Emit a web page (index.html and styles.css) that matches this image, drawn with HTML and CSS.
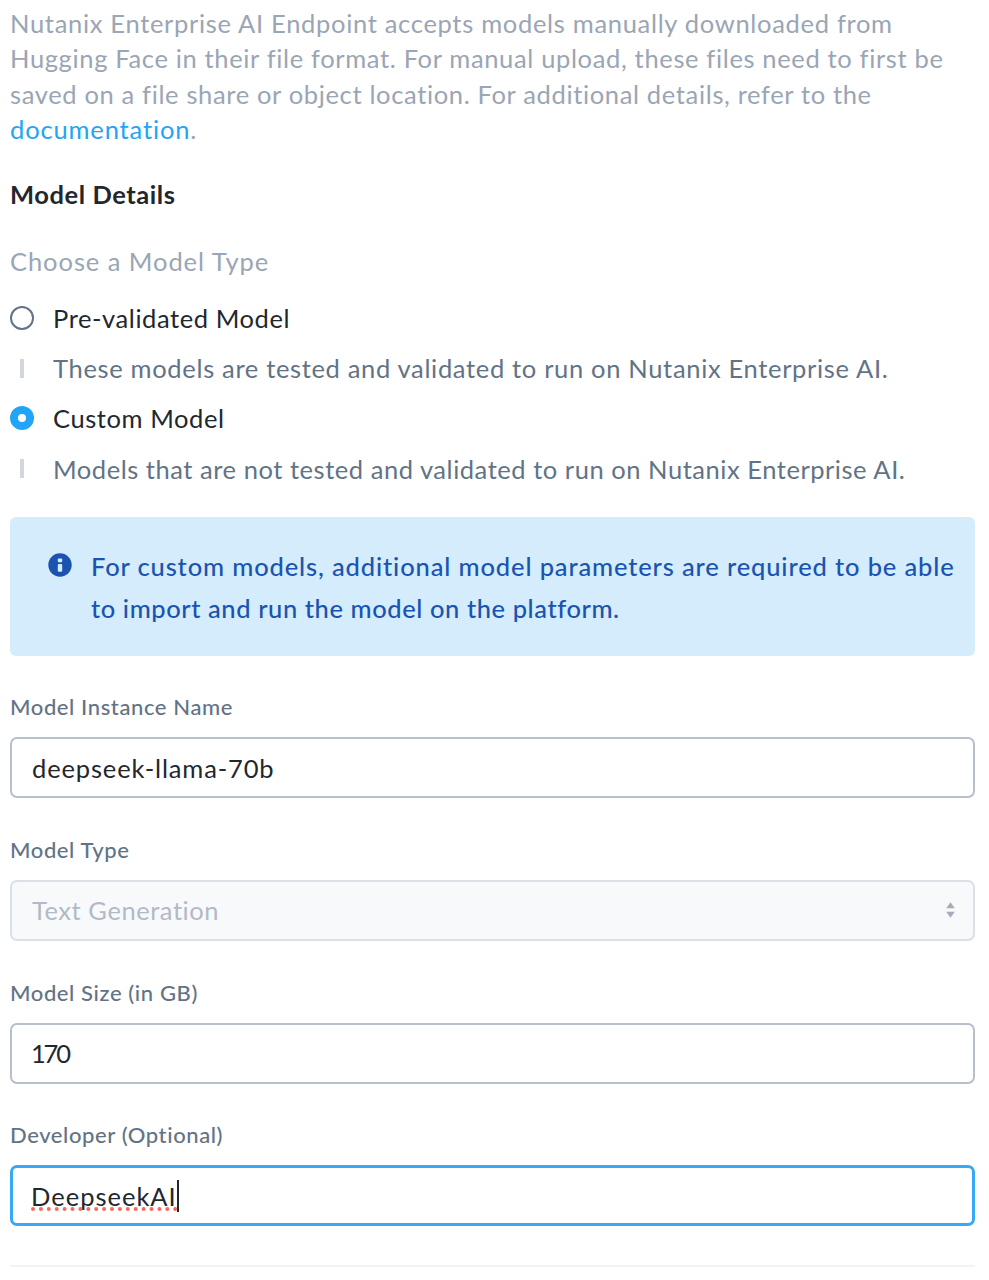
FILE: index.html
```html
<!DOCTYPE html>
<html lang="en">
<head>
  <meta charset="UTF-8" />
  <meta name="viewport" content="width=device-width, initial-scale=1.0"/>
  <title>Import Model</title>
  <link rel="stylesheet" href="styles.css">
</head>
<body>
  <div class="form">
    <p class="intro">
      <span class="line line-1">Nutanix Enterprise AI Endpoint accepts models manually downloaded from</span>
      <span class="line line-2">Hugging Face in their file format. For manual upload, these files need to first be</span>
      <span class="line line-3">saved on a file share or object location. For additional details, refer to the</span>
      <span class="line line-4"><a href="#">documentation</a>.</span>
    </p>

    <h2>Model Details</h2>
    <p class="choose">Choose a Model Type</p>

    <div class="options">
      <div class="option">
        <span class="radio"></span>
        <span class="option-name">Pre-validated Model</span>
      </div>
      <div class="option">
        <span class="bar"></span>
        <span class="option-text text-1">These models are tested and validated to run on Nutanix Enterprise AI.</span>
      </div>
      <div class="option">
        <span class="radio checked"></span>
        <span class="option-name">Custom Model</span>
      </div>
      <div class="option">
        <span class="bar"></span>
        <span class="option-text text-2">Models that are not tested and validated to run on Nutanix Enterprise AI.</span>
      </div>
    </div>

    <div class="alert">
      <svg class="info" width="24" height="24" viewBox="0 0 24 24">
        <circle cx="12" cy="12" r="11.7" fill="#1a54b0"/>
        <rect x="9.8" y="5.4" width="4.4" height="3.8" rx="1" fill="#d4ecfc"/>
        <rect x="9.8" y="11" width="4.4" height="7.8" rx="1" fill="#d4ecfc"/>
      </svg>
      <p>
        <span class="line alert-1">For custom models, additional model parameters are required to be able</span>
        <span class="line alert-2">to import and run the model on the platform.</span>
      </p>
    </div>

    <div class="field">
      <div class="label">Model Instance Name</div>
      <div class="input"><span class="value-name">deepseek-llama-70b</span></div>
    </div>

    <div class="field">
      <div class="label label-type">Model Type</div>
      <div class="input disabled">
        <span class="value-type">Text Generation</span>
        <svg class="arrows" width="9" height="16" viewBox="0 0 9 16">
          <path d="M4.5 0.2 L8.8 6.2 H0.2 Z M0.2 9.8 H8.8 L4.5 15.8 Z" fill="#a6adb8"/>
        </svg>
      </div>
    </div>

    <div class="field">
      <div class="label">Model Size (in GB)</div>
      <div class="input size"><span class="value-size">170</span></div>
    </div>

    <div class="field">
      <div class="label">Developer (Optional)</div>
      <div class="input focused">
        <span class="value-dev">DeepseekAI</span><span class="caret"></span>
        <svg class="spelling" width="148" height="4" viewBox="0 0 148 4">
          <path d="M2 2 H146" stroke="#f9685f" stroke-width="4" stroke-linecap="round" stroke-dasharray="0 7.9"/>
        </svg>
      </div>
    </div>

    <div class="divider"></div>
  </div>
</body>
</html>
```
FILE: styles.css
```css
* {
  box-sizing: border-box;
}

body {
  margin: 0;
  background: #fff;
  font-family: Lato, "Open Sans", sans-serif;
  font-size: 25.5px;
  letter-spacing: 0.65px;
  color: #22272e;
}

p, h2 {
  margin: 0;
}

.form {
  padding: 6px 14px 0 10px;
}

.line {
  display: block;
  white-space: nowrap;
}

.intro {
  line-height: 35.4px;
  color: #9aa5b5;
}

.line-1 {
  letter-spacing: 0.69px;
}

.line-4 {
  letter-spacing: 0.85px;
}

.intro a {
  color: #22a5f7;
  text-decoration: none;
}

h2 {
  margin-top: 28.6px;
  font-size: 25.5px;
  line-height: 36px;
  font-weight: 700;
  letter-spacing: 0.57px;
}

.choose {
  margin-top: 31px;
  line-height: 36px;
  letter-spacing: 0.93px;
  color: #9aa5b5;
}

.options {
  margin-top: 14px;
}

.option {
  display: flex;
  align-items: center;
  height: 50.1px;
  white-space: nowrap;
}

.option-name {
  letter-spacing: 0.58px;
}

.radio {
  width: 24px;
  height: 24px;
  margin-right: 19px;
  border: 2px solid #627386;
  border-radius: 50%;
}

.radio.checked {
  border: 8px solid #22a5f7;
}

.bar {
  width: 4px;
  height: 19px;
  margin: 0 29px 0 10px;
  background: #d2d7df;
}

.option-text {
  color: #627386;
}

.text-1 {
  letter-spacing: 0.67px;
}

.text-2 {
  letter-spacing: 0.54px;
}

.alert {
  display: flex;
  height: 139px;
  margin-top: 23.4px;
  padding: 28px 0 0 38px;
  border-radius: 6px;
  background: #d4ecfc;
  color: #1a54b0;
  font-weight: 500;
  line-height: 42.3px;
}

.alert-1 {
  letter-spacing: 0.86px;
}

.alert-2 {
  letter-spacing: 0.58px;
}

.info {
  margin: 8px 19px 0 0;
}

.field {
  height: 142.7px;
}

.alert + .field {
  margin-top: 38.3px;
}

.label {
  margin-bottom: 18px;
  font-size: 22px;
  font-weight: 500;
  line-height: 25px;
  letter-spacing: 0.6px;
  color: #627386;
}

.input {
  position: relative;
  display: flex;
  align-items: center;
  height: 61px;
  padding: 0 18px 0 20px;
  border: 2px solid #b8bfcc;
  border-radius: 7px;
}

.input.size {
  padding-left: 19px;
}

.input.disabled {
  justify-content: space-between;
  border-color: #dbe0e8;
  background: #f8f9fb;
  color: #b2bac6;
}

.input.focused {
  border: 3px solid #35a8f8;
  padding-left: 18px;
}

.value-name {
  letter-spacing: 0.86px;
}

.value-type {
  letter-spacing: 0.55px;
}

.value-size {
  letter-spacing: -2.2px;
}

.value-dev {
  letter-spacing: 1px;
}

.caret {
  width: 2px;
  height: 32px;
  background: #22272e;
}

.spelling {
  position: absolute;
  left: 18px;
  top: 39px;
}

.divider {
  height: 2px;
  background: #f2f3f5;
}
```
